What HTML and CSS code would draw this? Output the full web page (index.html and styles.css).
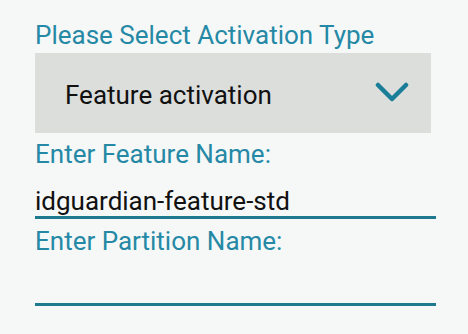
FILE: index.html
```html
<!DOCTYPE html>
<html>
<head>
  <meta charset="UTF-8">
  <title>Activation</title>
  <link rel="stylesheet" href="styles.css">
</head>
<body>
  <div class="form">
    <label class="field-label">Please Select Activation Type</label>
    <div class="spinner">
      <span class="spinner-text">Feature activation</span>
      <svg class="chevron" width="34" height="22" viewBox="0 0 34 22">
        <polyline points="3,3 17,17 31,3" fill="none" stroke="#1b7e98" stroke-width="4.5" stroke-linecap="round" stroke-linejoin="round"/>
      </svg>
    </div>
    <label class="field-label">Enter Feature Name:</label>
    <div class="edit">idguardian-feature-std</div>
    <label class="field-label">Enter Partition Name:</label>
    <div class="edit"></div>
  </div>
</body>
</html>
```

FILE: styles.css
```css
body {
  margin: 0;
  background: #f6f8f7;
  font-family: Roboto, "Liberation Sans", sans-serif;
}
.form {
  padding: 20px 32px 0 35px;
  display: flex;
  flex-direction: column;
}
.field-label {
  color: #2589a6;
  font-size: 26px;
  line-height: 30px;
  padding-left: 0;
}
.spinner {
  margin-top: 3px;
  height: 80px;
  width: 396px;
  background: #dcdedc;
  display: flex;
  align-items: center;
  justify-content: space-between;
  padding: 3px 22px 0 30px;
  box-sizing: border-box;
}
.spinner-text {
  font-size: 26px;
  line-height: 30px;
  color: #111;
}
.chevron {
  margin-top: -3px;
}
.spinner + .field-label {
  margin-top: 6px;
}
.edit {
  height: 50px;
  box-sizing: border-box;
  border-bottom: 3px solid #1f7a90;
  font-size: 26px;
  color: #111;
  padding-top: 17px;
  line-height: 30px;
}
.edit + .field-label {
  margin-top: 7px;
}
```
